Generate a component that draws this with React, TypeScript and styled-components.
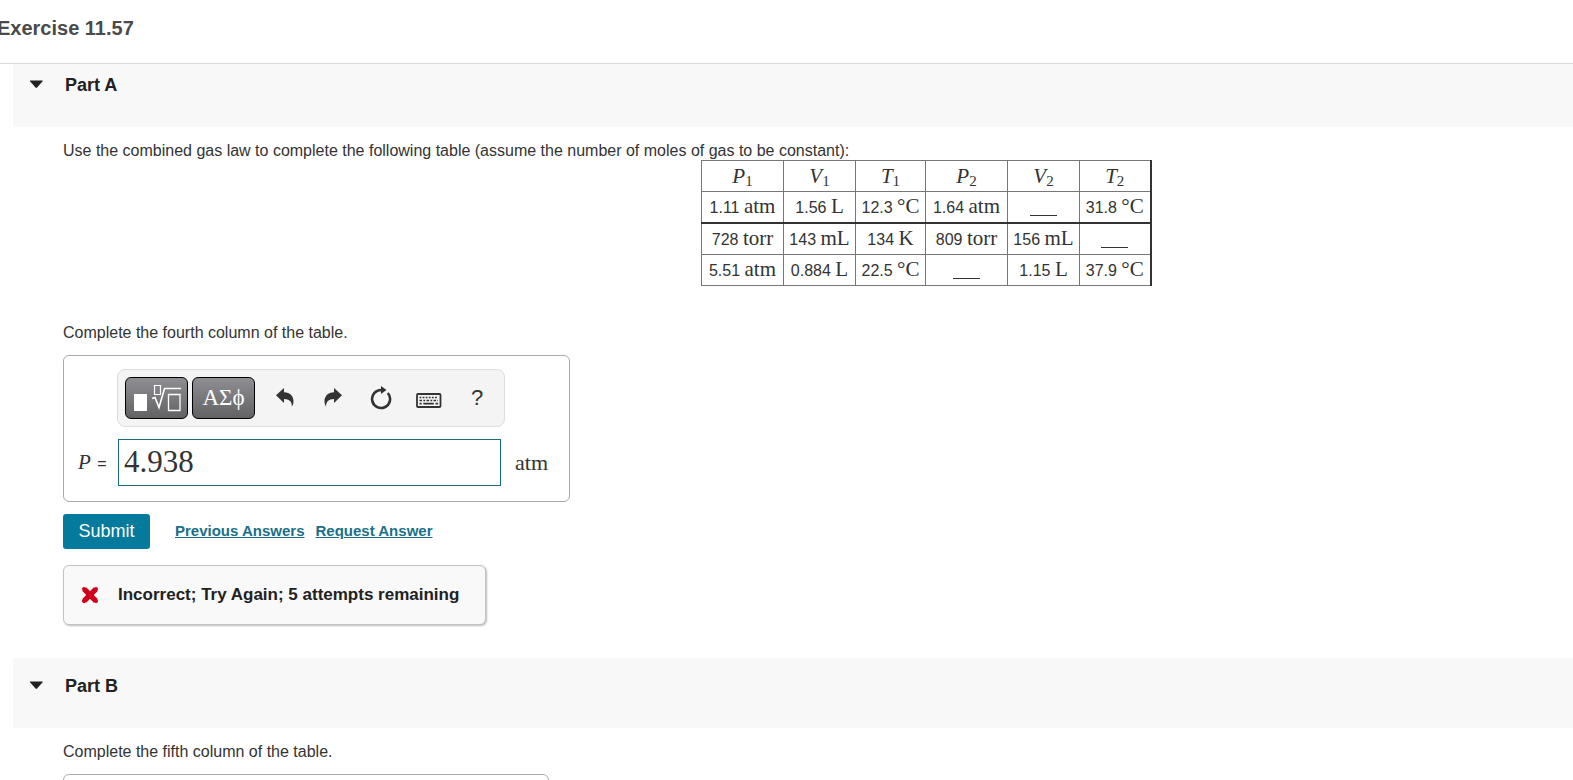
import React from "react";
import styled, { createGlobalStyle } from "styled-components";

const GlobalStyle = createGlobalStyle`
  * { box-sizing: border-box; }
  body {
    margin: 0;
    background: #fff;
    color: #333;
    font: 16px/20px "Liberation Sans", Arial, sans-serif;
    overflow-x: hidden;
  }
`;

const serif = `"Liberation Serif", "Times New Roman", serif`;

const PageHeader = styled.header`
  height: 64px;
  padding-top: 16px;
  border-bottom: 1px solid #d9d9d9;
`;

const PageTitle = styled.h1`
  margin: 0 0 0 -3px;
  font-size: 20px;
  line-height: 24px;
  color: #4a4a4a;
`;

const Part = styled.section`
  margin-bottom: 33px;
`;

const PartHeader = styled.div<{ $first?: boolean }>`
  display: flex;
  align-items: flex-start;
  height: ${(p) => (p.$first ? 63 : 70)}px;
  margin-left: 13px;
  padding-top: ${(p) => (p.$first ? 11 : 18)}px;
  background: #f8f8f8;
`;

const Toggle = styled.button`
  width: 52px;
  height: 20px;
  padding: 0 0 0 16px;
  border: 0;
  background: none;
  text-align: left;
  line-height: 0;
`;

const PartTitle = styled.h2`
  margin: 0;
  font-size: 18px;
  line-height: 20px;
  color: #212121;
`;

const PartBody = styled.div`
  padding: 14px 0 0 63px;
`;

const Prompt = styled.p`
  margin: 0;
`;

const DataTable = styled.table`
  margin: -1px 0 37px 638px;
  border-collapse: collapse;
  table-layout: fixed;
  width: 449px;
  border-right: 2px solid #333;
`;

const Col = styled.col<{ $w: number }>`
  width: ${(p) => p.$w}px;
`;

const Row = styled.tr<{ $heavy?: boolean }>`
  border-bottom: ${(p) => (p.$heavy ? "2px solid #333" : "1px solid #777")};
`;

const HeadCell = styled.th`
  height: 31px;
  padding: 0;
  border: solid #777;
  border-width: 1px 1px 0 1px;
  font: italic 21px/28px ${serif};
  text-align: center;
`;

const Sub = styled.sub`
  font: 15px/15px ${serif};
  vertical-align: -3px;
`;

const Cell = styled.td`
  height: 31px;
  padding: 2px 0 0;
  border-left: 1px solid #777;
  line-height: 28px;
  text-align: center;
  white-space: nowrap;
`;

const Unit = styled.span`
  font: 21px/20px ${serif};
`;

const Blank = styled.span`
  display: inline-block;
  width: 27px;
  height: 1px;
  background: #333;
  vertical-align: -3px;
`;

const AnswerBox = styled.div<{ $wide?: boolean }>`
  width: ${(p) => (p.$wide ? 507 : 486)}px;
  height: 147px;
  margin-top: 12px;
  padding: 13px 14px;
  border: 1px solid #aaa;
  border-radius: 6px;
`;

const Toolbar = styled.div`
  display: flex;
  align-items: center;
  width: 388px;
  height: 58px;
  margin-left: 39px;
  padding-left: 7px;
  border: 1px solid #ddd;
  border-radius: 8px;
  background: #f4f4f4;
`;

const ToolGroup = styled.div<{ $start?: number }>`
  display: flex;
  gap: ${(p) => (p.$start ? 0 : 4)}px;
  margin-left: ${(p) => p.$start ?? 0}px;
`;

const PaletteButton = styled.button`
  display: flex;
  align-items: center;
  justify-content: center;
  width: 63px;
  height: 42px;
  padding: 0;
  border: 1px solid #000;
  border-radius: 6px;
  background: linear-gradient(#8f8e93, #626264);
  color: #fff;
  font: 23px/38px ${serif};
`;

const ToolButton = styled.button`
  display: flex;
  align-items: center;
  justify-content: center;
  width: 48px;
  height: 42px;
  padding: 0;
  border: 0;
  background: none;
  color: #333;
  font: 22px/42px "Liberation Sans", Arial, sans-serif;
`;

const AnswerRow = styled.div`
  display: flex;
  align-items: center;
  margin-top: 12px;
`;

const AnswerLabel = styled.label`
  width: 40px;
  font-size: 16px;
`;

const Variable = styled.i`
  margin-right: 2px;
  font: italic 21px/20px ${serif};
`;

const AnswerInput = styled.input`
  width: 383px;
  height: 47px;
  margin-right: 14px;
  padding: 0 5px 1px;
  border: 1px solid #1d6b80;
  outline: 0;
  color: #333;
  font: 31px/40px ${serif};
`;

const AnswerUnit = styled(Unit)`
  font-size: 22px;
`;

const Actions = styled.div`
  display: flex;
  align-items: center;
  margin-top: 12px;
`;

const Submit = styled.button`
  width: 87px;
  height: 35px;
  margin-right: 25px;
  padding: 0 0 2px;
  border: 0;
  border-radius: 3px;
  background: #047a9c;
  color: #fff;
  font: 18px/20px "Liberation Sans", Arial, sans-serif;
`;

const ActionLink = styled.a`
  margin: 0 11px 2px 0;
  color: #1a7088;
  font-size: 15px;
  font-weight: bold;
`;

const Feedback = styled.div`
  display: flex;
  align-items: center;
  width: 423px;
  height: 60px;
  margin-top: 16px;
  padding-left: 17px;
  gap: 19px;
  border: 1px solid #c3c3c3;
  border-radius: 6px;
  background: #f9f9f9;
  box-shadow: 1px 1px 2px #bbb;
  color: #212121;
  font-size: 17px;
  font-weight: bold;
  white-space: nowrap;
`;

const Caret = () => (
  <svg width="14" height="20" viewBox="0 0 14 20" aria-hidden="true">
    <path d="M1.300 5.500h12q.8 0 .3.700L8.100 12.600q-.8.800-1.600 0L1 6.200q-.5-.7.300-.7z" fill="#212121" />
  </svg>
);

const TemplateIcon = () => (
  <svg width="48" height="28" viewBox="0 0 48 28" fill="none" stroke="#fff">
    <path d="M1 10h13v17H1z" fill="#fff" stroke="none" />
    <path d="M21.500 1.500h6v9h-6z" strokeWidth="1.200" />
    <path d="M19 14.500l3-1 4 10L31.500 4.500H48" strokeWidth="1.600" />
    <path d="M35.500 10.500h11.500v16H35.500z" strokeWidth="1.300" />
  </svg>
);

const CurvedArrow = ({ flip }: { flip?: boolean }) => (
  <svg width="18" height="20" viewBox="0 0 18 20">
    <path
      d="M0 7.300 8 0v4.200c6 0 9.500 4 9.500 8.800 0 2.500-.6 4.400-1.600 5.500.2-4.800-2.400-7.600-7.900-7.600v4z"
      fill="#333"
      transform={flip ? "matrix(-1 0 0 1 18 0)" : undefined}
    />
  </svg>
);

const ResetIcon = () => (
  <svg width="22" height="26" viewBox="0 0 22 26">
    <path d="M11.500 5A9 9 0 1 0 17.800 8" fill="none" stroke="#333" strokeWidth="2.600" />
    <path d="M11 1v8l5.500-4z" fill="#333" />
  </svg>
);

const KeyboardIcon = () => (
  <svg width="26" height="22" viewBox="0 0 26 22">
    <rect x="1" y="7" width="23.500" height="13" rx="1" fill="none" stroke="#333" strokeWidth="1.800" />
    <path d="M3.500 10.500h18.500" stroke="#333" strokeWidth="1.700" strokeDasharray="1.800 1.300" />
    <path d="M3.500 13.500h18.500" stroke="#333" strokeWidth="1.700" strokeDasharray="2.600 1.300 1.800 1.300" />
    <path d="M3.500 16.700h2.200M7.300 16.700h10.500M19.500 16.700h2.500" stroke="#333" strokeWidth="1.700" />
  </svg>
);

const CrossIcon = () => (
  <svg width="18" height="18" viewBox="0 0 18 18">
    <path d="M3.200 3.200l11.600 11.600M14.800 3.200L3.200 14.800" stroke="#d0021b" strokeWidth="5.400" />
    <path d="M3 3l12 12M15 3L3 15" stroke="#d0021b" strokeWidth="4" strokeLinecap="round" />
  </svg>
);

const variables = [["P", 1], ["V", 1], ["T", 1], ["P", 2], ["V", 2], ["T", 2]] as const;

const rows: string[][] = [
  ["1.11 atm", "1.56 L", "12.3 °C", "1.64 atm", "", "31.8 °C"],
  ["728 torr", "143 mL", "134 K", "809 torr", "156 mL", ""],
  ["5.51 atm", "0.884 L", "22.5 °C", "", "1.15 L", "37.9 °C"],
];

const Quantity = ({ text }: { text: string }) => {
  if (!text) return <Blank />;
  const [value, unit] = text.split(" ");
  return <>{value} <Unit>{unit}</Unit></>;
};

export default function App() {
  return (
    <>
      <GlobalStyle />
      <PageHeader>
        <PageTitle>Exercise 11.57</PageTitle>
      </PageHeader>
      <main>
        <Part>
          <PartHeader $first>
            <Toggle aria-label="Collapse Part A"><Caret /></Toggle>
            <PartTitle>Part A</PartTitle>
          </PartHeader>
          <PartBody>
            <Prompt>
              Use the combined gas law to complete the following table (assume the number of moles of gas to be constant):
            </Prompt>
            <DataTable>
              <colgroup>
                {[82, 72, 70, 82, 72, 71].map((w, i) => <Col key={i} $w={w} />)}
              </colgroup>
              <thead>
                <Row>
                  {variables.map(([name, index]) => (
                    <HeadCell key={name + index} scope="col">{name}<Sub>{index}</Sub></HeadCell>
                  ))}
                </Row>
              </thead>
              <tbody>
                {rows.map((row, r) => (
                  <Row key={r} $heavy={r === 0}>
                    {row.map((text, c) => <Cell key={c}><Quantity text={text} /></Cell>)}
                  </Row>
                ))}
              </tbody>
            </DataTable>
            <Prompt>Complete the fourth column of the table.</Prompt>
            <AnswerBox $wide>
              <Toolbar>
                <ToolGroup>
                  <PaletteButton aria-label="Templates"><TemplateIcon /></PaletteButton>
                  <PaletteButton>ΑΣϕ</PaletteButton>
                </ToolGroup>
                <ToolGroup $start={6}>
                  <ToolButton aria-label="Undo"><CurvedArrow /></ToolButton>
                  <ToolButton aria-label="Redo"><CurvedArrow flip /></ToolButton>
                  <ToolButton aria-label="Reset"><ResetIcon /></ToolButton>
                  <ToolButton aria-label="Keyboard shortcuts"><KeyboardIcon /></ToolButton>
                  <ToolButton>?</ToolButton>
                </ToolGroup>
              </Toolbar>
              <AnswerRow>
                <AnswerLabel htmlFor="pressure"><Variable>P</Variable> =</AnswerLabel>
                <AnswerInput id="pressure" defaultValue="4.938" />
                <AnswerUnit>atm</AnswerUnit>
              </AnswerRow>
            </AnswerBox>
            <Actions>
              <Submit>Submit</Submit>
              <ActionLink href="#previous">Previous Answers</ActionLink>
              <ActionLink href="#request">Request Answer</ActionLink>
            </Actions>
            <Feedback role="status"><CrossIcon />Incorrect; Try Again; 5 attempts remaining</Feedback>
          </PartBody>
        </Part>
        <Part>
          <PartHeader>
            <Toggle aria-label="Collapse Part B"><Caret /></Toggle>
            <PartTitle>Part B</PartTitle>
          </PartHeader>
          <PartBody>
            <Prompt>Complete the fifth column of the table.</Prompt>
            <AnswerBox />
          </PartBody>
        </Part>
      </main>
    </>
  );
}
